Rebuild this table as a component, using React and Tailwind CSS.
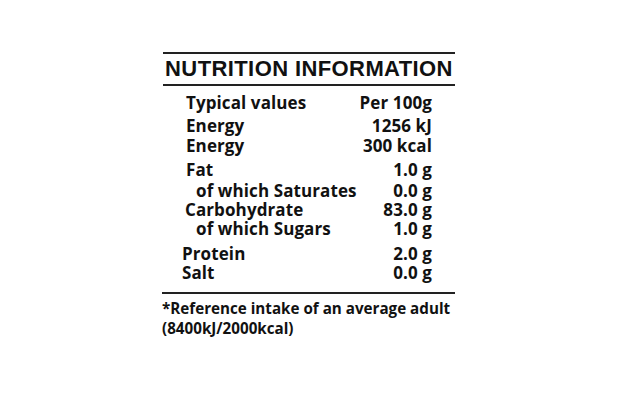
export default function App() {
  const rows = [
    ["Typical values", "Per 100g", "pl-[23px]", "h-[23px]"],
    ["Energy", "1256 kJ", "pl-[23px]", "h-[20px]"],
    ["Energy", "300 kcal", "pl-[23px]", "h-[24px]"],
    ["Fat", "1.0 g", "pl-[23px]", "h-[21px]"],
    ["of which Saturates", "0.0 g", "pl-[33px]", "h-[19px]"],
    ["Carbohydrate", "83.0 g", "pl-[22px]", "h-[19px]"],
    ["of which Sugars", "1.0 g", "pl-[33px]", "h-[25px]"],
    ["Protein", "2.0 g", "pl-[19px]", "h-[19px]"],
    ["Salt", "0.0 g", "pl-[19px]", "h-[18px]"],
  ];
  return (
    <div className="w-[620px] h-[400px] bg-white pt-[52px] pl-[163px]" style={{ fontFamily: "'Open Sans', Lato, sans-serif" }}>
      <div className="w-[292px] text-[#111]">
        <div className="border-t-[2px] border-b-[2px] border-[#222]">
          <div className="h-[30px] flex items-center justify-center text-[22px] font-bold tracking-[0.4px] leading-none whitespace-nowrap" style={{ fontFamily: "'Liberation Sans', Arial, sans-serif" }}>
            NUTRITION INFORMATION
          </div>
        </div>
        <div className="pr-[23px] pt-[9px] pb-[9px] font-bold text-[17px] tracking-[0.1px] leading-[16px]">
          {rows.map(([a, b, pl, h], i) => (
            <div key={i} className={`flex justify-between items-start whitespace-nowrap ${pl} ${h}`}>
              <span>{a}</span>
              <span>{b}</span>
            </div>
          ))}
        </div>
        <div className="border-t-[2px] border-[#222] pt-[4px] font-bold text-[15.2px] leading-[20px] -ml-[1px] whitespace-nowrap">
          <div>*Reference intake of an average adult</div>
          <div>(8400kJ/2000kcal)</div>
        </div>
      </div>
    </div>
  );
}
